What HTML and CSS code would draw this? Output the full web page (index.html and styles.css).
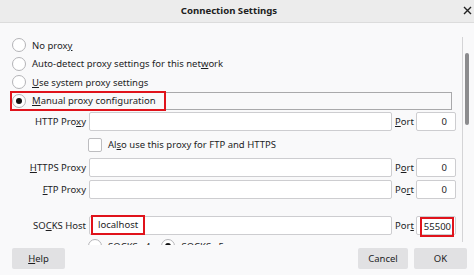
FILE: index.html
```html
<!DOCTYPE html>
<html>
<head>
<meta charset="utf-8">
<link rel="stylesheet" href="styles.css">
</head>
<body>
<div class="dialog">
  <header class="titlebar">
    <span class="title">Connection Settings</span>
    <svg class="close" width="9" height="9" viewBox="0 0 9 9"><path d="M1 1L8 8M8 1L1 8" stroke="#222" stroke-width="1.4"/></svg>
  </header>
  <main class="scroller">
    <div class="content">
      <div class="radios">
        <div class="radio-row"><span class="radio"></span><span>No prox<u>y</u></span></div>
        <div class="radio-row"><span class="radio"></span><span>Auto-detect proxy settings for this net<u>w</u>ork</span></div>
        <div class="radio-row"><span class="radio"></span><span><u>U</u>se system proxy settings</span></div>
        <div class="radio-row focused">
          <span class="mark-red mark-row"><span class="radio checked"></span><span><u>M</u>anual proxy configuration</span></span>
        </div>
      </div>
      <div class="fields">
        <div class="field-row">
          <label class="lbl">HTTP Pro<u>x</u>y</label>
          <div class="input"></div>
          <label class="port-lbl"><u>P</u>ort</label>
          <div class="input port">0</div>
        </div>
        <div class="check-row">
          <span class="checkbox"></span><span>Al<u>s</u>o use this proxy for FTP and HTTPS</span>
        </div>
        <div class="field-row">
          <label class="lbl"><u>H</u>TTPS Proxy</label>
          <div class="input"></div>
          <label class="port-lbl">P<u>o</u>rt</label>
          <div class="input port">0</div>
        </div>
        <div class="field-row gap-small">
          <label class="lbl"><u>F</u>TP Proxy</label>
          <div class="input"></div>
          <label class="port-lbl">Po<u>r</u>t</label>
          <div class="input port">0</div>
        </div>
        <div class="field-row gap-big">
          <label class="lbl">SO<u>C</u>KS Host</label>
          <div class="input"><span class="mark-red mark-host">localhost</span></div>
          <label class="port-lbl">Por<u>t</u></label>
          <div class="input port port-marked"><span class="mark-red mark-port">55500</span></div>
        </div>
        <div class="socks-row">
          <span class="radio"></span><span class="socks-lbl">SOCKS v4</span>
          <span class="radio checked"></span><span class="socks-lbl">SOCKS v5</span>
        </div>
      </div>
    </div>
    <div class="scrollbar"><div class="thumb"></div></div>
  </main>
  <footer class="footer">
    <button class="btn"><u>H</u>elp</button>
    <div class="spacer"></div>
    <button class="btn btn-cancel">Cancel</button>
    <button class="btn btn-ok">OK</button>
  </footer>
</div>
</body>
</html>
```

FILE: styles.css
```css
* { box-sizing: border-box; }
html, body {
  margin: 0;
  padding: 0;
  width: 474px;
  height: 275px;
  overflow: hidden;
  background: #f9f9fa;
  font-family: "Noto Sans", "DejaVu Sans", sans-serif;
  font-size: 9.5px;
  color: #1d1d1f;
}
u { text-decoration: underline; text-underline-offset: 1px; }
.dialog { display: flex; flex-direction: column; height: 275px; }

.titlebar {
  height: 23px;
  flex: none;
  background: #ececec;
  border-bottom: 1px solid #dcdcdc;
  display: flex;
  align-items: center;
  justify-content: center;
  padding-right: 16px;
  position: relative;
}
.title { font-weight: bold; font-size: 9.6px; color: #202020; margin-top: -2px; }
.close { position: absolute; right: 2px; top: 6px; }

.scroller {
  height: 222px;
  flex: none;
  display: flex;
  overflow: hidden;
}
.content {
  flex: 1;
  padding: 13px 0 0 10px;
}
.radios { margin-right: 10px; }
.radio-row {
  height: 18.5px;
  display: flex;
  align-items: center;
  gap: 6px;
  padding-left: 2px;
}
.radio-row.focused {
  border: 1px solid #a9a9ab;
  padding-left: 0;
}
.mark-red { border: 2px solid #e0131b; }
.mark-row {
  display: flex;
  align-items: center;
  gap: 6px;
  height: 20px;
  margin-left: -1px;
  padding-right: 8px;
}
.radio {
  width: 14px;
  height: 14px;
  flex: none;
  border-radius: 50%;
  border: 1px solid #b4b4b7;
  background: #fff;
  display: inline-flex;
  align-items: center;
  justify-content: center;
}
.radio.checked::after {
  content: "";
  width: 6px;
  height: 6px;
  border-radius: 50%;
  background: #111;
}

.fields { margin-top: 2px; padding-right: 6px; }
.field-row {
  display: grid;
  grid-template-columns: 76px 1fr 18px 40px;
  column-gap: 3px;
  align-items: center;
  height: 19px;
}
.gap-small { margin-top: 3px; }
.gap-big { margin-top: 17px; }
.lbl { text-align: right; white-space: nowrap; }
.port-lbl { white-space: nowrap; }
.input {
  height: 19px;
  background: #fff;
  border: 1px solid #cdcdd0;
  border-radius: 2px;
  display: flex;
  align-items: center;
  padding: 0 6px;
}
.input.port { justify-content: flex-end; padding-right: 8px; }
.input.port-marked { padding: 0 1px 0 0; overflow: visible; }
.mark-host {
  margin-left: -5px;
  height: 20px;
  padding: 0 5px;
  display: flex;
  align-items: center;
  margin-top: -2px;
}
.mark-port {
  height: 20px;
  padding: 0 1px 0 2px;
  display: flex;
  align-items: center;
  margin-top: 2px;
}

.check-row {
  height: 27px;
  display: flex;
  align-items: center;
  padding-left: 78px;
  gap: 6px;
}
.checkbox {
  width: 14px;
  height: 14px;
  border: 1px solid #bdbdc0;
  border-radius: 2px;
  background: #fff;
}
.socks-row {
  margin-top: 4px;
  padding-left: 78px;
  display: flex;
  align-items: center;
  height: 14px;
}
.socks-lbl { margin: 0 11px 0 6px; }

.scrollbar {
  width: 12px;
  flex: none;
  margin-top: 14px;
  height: 205px;
  border-left: 1px solid #d4d4d6;
  padding-left: 2px;
}
.thumb {
  margin-top: 16px;
  width: 4px;
  height: 72px;
  background: #8c8c8e;
  border-radius: 2px;
}

.footer {
  flex: 1;
  display: flex;
  align-items: flex-start;
  padding: 3px 7px 0 12px;
  gap: 6px;
  background: #f9f9fa;
}
.spacer { flex: 1; }
.btn {
  font: inherit;
  color: #1d1d1f;
  height: 21px;
  width: 53px;
  border: none;
  border-radius: 2px;
  background: #e1e1e3;
  padding: 0;
}
.btn-cancel { width: 50px; }
```
